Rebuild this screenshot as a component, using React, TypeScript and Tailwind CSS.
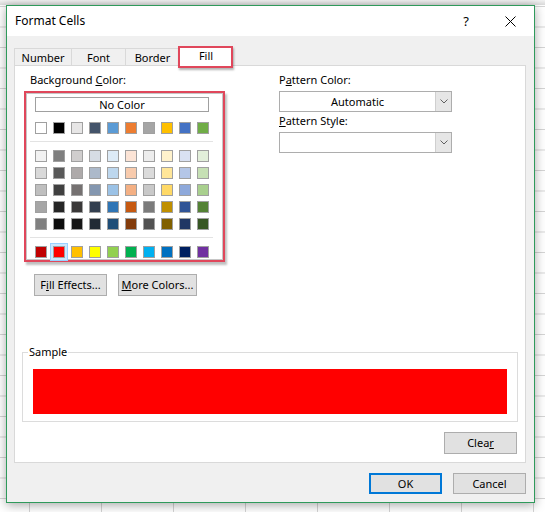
import React from "react";

const themeRow = [
  "bg-[#ffffff]", "bg-[#000000]", "bg-[#e7e6e6]", "bg-[#44546a]", "bg-[#5b9bd5]",
  "bg-[#ed7d31]", "bg-[#a5a5a5]", "bg-[#ffc000]", "bg-[#4472c4]", "bg-[#70ad47]",
];

const shadeRows = [
  ["bg-[#f2f2f2]", "bg-[#7f7f7f]", "bg-[#d0cece]", "bg-[#d6dce4]", "bg-[#ddebf7]", "bg-[#fce4d6]", "bg-[#ededed]", "bg-[#fff2cc]", "bg-[#d9e1f2]", "bg-[#e2efda]"],
  ["bg-[#d9d9d9]", "bg-[#595959]", "bg-[#aeaaaa]", "bg-[#acb9ca]", "bg-[#bdd7ee]", "bg-[#f8cbad]", "bg-[#dbdbdb]", "bg-[#ffe699]", "bg-[#b4c6e7]", "bg-[#c6e0b4]"],
  ["bg-[#bfbfbf]", "bg-[#404040]", "bg-[#757171]", "bg-[#8497b0]", "bg-[#9bc2e6]", "bg-[#f4b084]", "bg-[#c9c9c9]", "bg-[#ffd966]", "bg-[#8ea9db]", "bg-[#a9d08e]"],
  ["bg-[#a6a6a6]", "bg-[#262626]", "bg-[#3a3838]", "bg-[#333f4f]", "bg-[#2f75b5]", "bg-[#c65911]", "bg-[#7b7b7b]", "bg-[#bf8f00]", "bg-[#305496]", "bg-[#548235]"],
  ["bg-[#808080]", "bg-[#0d0d0d]", "bg-[#161616]", "bg-[#222b35]", "bg-[#1f4e78]", "bg-[#833c0c]", "bg-[#525252]", "bg-[#806000]", "bg-[#203764]", "bg-[#375623]"],
];

const standardRow = [
  "bg-[#c00000]", "bg-[#ff0000]", "bg-[#ffc000]", "bg-[#ffff00]", "bg-[#92d050]",
  "bg-[#00b050]", "bg-[#00b0f0]", "bg-[#0070c0]", "bg-[#002060]", "bg-[#7030a0]",
];

function Swatch({ cls, selected }: { cls: string; selected?: boolean }) {
  return (
    <div className="relative w-[12px] h-[12px]">
      {selected && (
        <div className="absolute -inset-[3px] border border-[#99d1ff] bg-[#cce8ff]" />
      )}
      <div className={`relative w-[12px] h-[12px] border border-[#a0a0a0] ${cls}`} />
    </div>
  );
}

function SwatchRow({ row, selectedIndex }: { row: string[]; selectedIndex?: number }) {
  return (
    <div className="flex gap-[6px]">
      {row.map((c, i) => (
        <Swatch key={i} cls={c} selected={i === selectedIndex} />
      ))}
    </div>
  );
}

function Chevron() {
  return (
    <svg width="8" height="5" viewBox="0 0 8 5" className="block">
      <polyline points="0.5,0.5 4,4 7.5,0.5" fill="none" stroke="#606060" strokeWidth="1" />
    </svg>
  );
}

function Combo({ text }: { text?: string }) {
  return (
    <div className="flex h-[21px] border border-[#adadad] bg-white">
      <div className="flex flex-1 items-center justify-center">{text}</div>
      <div className="flex w-[16px] items-center justify-center border-l border-[#cfcfcf] bg-[#e6e6e6]">
        <Chevron />
      </div>
    </div>
  );
}

function Btn({ children, className = "" }: { children: React.ReactNode; className?: string }) {
  return (
    <div
      className={`flex items-center justify-center border border-[#adadad] bg-[#e1e1e1] ${className}`}
    >
      {children}
    </div>
  );
}

export default function App() {
  return (
    <div className="relative w-[545px] h-[512px] overflow-hidden bg-white bg-[linear-gradient(to_right,#d4d4d4_1px,transparent_1px),linear-gradient(to_bottom,#d4d4d4_1px,transparent_1px)] bg-[size:72px_20.5px] bg-[position:29px_6px] font-['Noto_Sans',sans-serif] text-[11px] leading-[14px] text-black">
      <div className="h-[5px] w-full bg-[linear-gradient(to_bottom,#f2f2f2,#dadada)]" />

      {/* Dialog window */}
      <div className="absolute left-[6px] top-[5px] flex h-[498px] w-[529px] flex-col border border-[#2f9a5b] bg-[#f0f0f0] shadow-[0_2px_10px_rgba(0,0,0,0.35)]">
        {/* Title bar */}
        <div className="flex h-[30px] items-center bg-white pl-[8px] text-[12px] leading-[16px]">
          <span>Format Cells</span>
          <div className="ml-auto mr-[18px] flex items-center gap-[36px]">
            <span className="text-[13px]">?</span>
            <svg width="11" height="11" viewBox="0 0 11 11" className="block">
              <line x1="0.5" y1="0.5" x2="10.5" y2="10.5" stroke="#000" strokeWidth="1" />
              <line x1="10.5" y1="0.5" x2="0.5" y2="10.5" stroke="#000" strokeWidth="1" />
            </svg>
          </div>
        </div>

        {/* Body */}
        <div className="flex flex-1 flex-col pl-[7px] pr-[8px] pt-[10px] pb-[8px]">
          {/* Tabs */}
          <div className="relative z-10 flex h-[19px] items-end">
            <div className="h-[17px] w-[58px] border-l border-t border-r border-[#d9d9d9] bg-[#f0f0f0] pt-[2px] text-center">
              Number
            </div>
            <div className="h-[17px] w-[54px] border-t border-r border-[#d9d9d9] bg-[#f0f0f0] pt-[2px] text-center">
              Font
            </div>
            <div className="h-[17px] w-[54px] border-t border-r border-[#d9d9d9] bg-[#f0f0f0] pt-[2px] text-center">
              Border
            </div>
            <div className="relative -mb-px h-[20px] w-[53px] border-t border-r border-[#d9d9d9] bg-white pt-[2px] text-center">
              Fill
              <div className="pointer-events-none absolute -left-[2px] -top-[1px] -right-[1px] -bottom-[2px] border-2 border-[#e0475b] shadow-[1px_2px_2px_rgba(0,0,0,0.3)]" />
            </div>
          </div>

          {/* Panel */}
          <div className="flex h-[398px] flex-col border border-[#d9d9d9] bg-white">
            <div className="flex pl-[9px] pt-[7px]">
              {/* Left column */}
              <div className="flex w-[201px] flex-col">
                <div className="pl-[6px]">
                  Background <span className="underline">C</span>olor:
                </div>
                <div className="mt-[4px] border-2 border-[#e0475b] shadow-[2px_3px_2px_rgba(0,0,0,0.25)]">
                  <div className="flex flex-col border border-[#c6c6c6] bg-white pl-[8px] pt-[3px] pb-[1px]">
                    <div className="flex h-[15px] w-[174px] items-center justify-center border border-[#a0a0a0] bg-white leading-[13px]">
                      No Color
                    </div>
                    <div className="mt-[10px]">
                      <SwatchRow row={themeRow} />
                    </div>
                    <div className="-ml-[5px] mt-[7px] h-px w-[183px] bg-[#e3e3e3]" />
                    <div className="mt-[8px] flex flex-col gap-[5px]">
                      {shadeRows.map((r, i) => (
                        <SwatchRow key={i} row={r} />
                      ))}
                    </div>
                    <div className="-ml-[5px] mt-[7px] h-px w-[183px] bg-[#e3e3e3]" />
                    <div className="mt-[8px]">
                      <SwatchRow row={standardRow} selectedIndex={1} />
                    </div>
                  </div>
                </div>
                <div className="mt-[12px] flex gap-[11px] pl-[10px]">
                  <Btn className="h-[22px] w-[73px]">
                    <span>
                      F<span className="underline">i</span>ll Effects...
                    </span>
                  </Btn>
                  <Btn className="h-[22px] w-[79px]">
                    <span>
                      <span className="underline">M</span>ore Colors...
                    </span>
                  </Btn>
                </div>
              </div>

              {/* Right column */}
              <div className="ml-[54px] flex w-[173px] flex-col">
                <div>
                  P<span className="underline">a</span>ttern Color:
                </div>
                <div className="mt-[4px]">
                  <Combo text="Automatic" />
                </div>
                <div className="mt-[2px]">
                  <span className="underline">P</span>attern Style:
                </div>
                <div className="mt-[4px]">
                  <Combo />
                </div>
              </div>
            </div>

            {/* Sample group */}
            <div className="relative ml-[7px] mr-[7px] mt-[56px] h-[70px] border border-[#dcdcdc] px-[10px] pt-[16px]">
              <span className="absolute -top-[8px] left-[5px] bg-white px-px">Sample</span>
              <div className="h-[45px] w-full bg-[#ff0000]" />
            </div>

            <Btn className="mr-[8px] mt-[10px] h-[22px] w-[73px] self-end">
              <span>
                Clea<span className="underline">r</span>
              </span>
            </Btn>
          </div>

          {/* Footer buttons */}
          <div className="mt-[10px] flex justify-end gap-[11px]">
            <div className="flex h-[21px] w-[73px] items-center justify-center border-2 border-[#0078d7] bg-[#e1e1e1]">
              OK
            </div>
            <Btn className="h-[21px] w-[73px]">Cancel</Btn>
          </div>
        </div>
      </div>
    </div>
  );
}
